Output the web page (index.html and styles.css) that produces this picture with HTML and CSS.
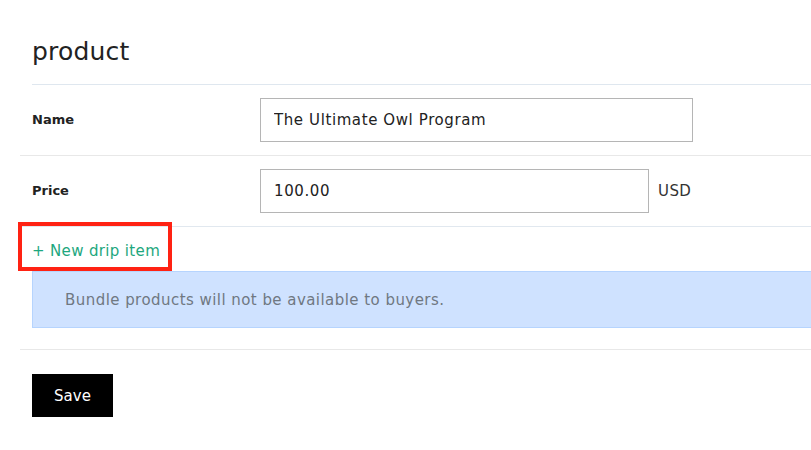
FILE: index.html
```html
<!DOCTYPE html>
<html>
<head>
<meta charset="utf-8">
<link rel="stylesheet" href="styles.css">
</head>
<body>
<div class="form">
  <div class="header"><h1 class="title">product</h1></div>
  <div class="row">
    <div class="label">Name</div>
    <div class="field"><input class="input input-name" type="text" value="The Ultimate Owl Program"></div>
  </div>
  <div class="row row-last">
    <div class="label">Price</div>
    <div class="field"><input class="input input-price" type="text" value="100.00"><span class="unit">USD</span></div>
  </div>
  <div class="drip">
    <a class="drip-link" href="#">+ New drip item</a>
  </div>
  <div class="alert">Bundle products will not be available to buyers.</div>
  <div class="actions">
    <button class="save">Save</button>
  </div>
</div>
</body>
</html>
```

FILE: styles.css
```css
* { box-sizing: border-box; }
html, body { margin: 0; padding: 0; background: #fff; }
body { font-family: "DejaVu Sans", "Open Sans", sans-serif; color: #222; }

.form { margin-left: 20px; }

.header {
  margin-left: 12px;
  height: 85px;
  border-bottom: 1px solid #dfe7ef;
}
.title {
  margin: 0;
  padding-top: 37px;
  font-size: 25px;
  font-weight: normal;
  line-height: 30px;
  letter-spacing: 0.2px;
  color: #222;
}

.row {
  display: grid;
  grid-template-columns: 228px 1fr;
  align-items: center;
  padding: 13px 0 13px 12px;
  border-bottom: 1px solid #e8e8e8;
}
.row-last { border-bottom-color: #e1e8ef; }
.label {
  font-size: 13px;
  font-weight: bold;
  color: #222;
  margin-top: -2px;
}
.field { display: flex; align-items: center; }
.input {
  height: 44px;
  border: 1px solid #b5b5b5;
  border-radius: 0;
  padding: 0 13px;
  font-family: inherit;
  font-size: 15px;
  letter-spacing: 0.6px;
  color: #222;
  outline: none;
}
.input-name { width: 433px; }
.input-price { width: 389px; }
.unit { margin-left: 9px; font-size: 15px; letter-spacing: 0.4px; color: #333; }

.drip {
  height: 44px;
  display: flex;
  align-items: flex-start;
}
.drip-link {
  display: flex;
  align-items: center;
  height: 49px;
  margin-top: -5px;
  margin-left: -2px;
  padding: 8px 8px 0 10px;
  border: 4px solid #ff2213;
  color: #1ea77e;
  font-size: 15px;
  letter-spacing: 0.35px;
  text-decoration: none;
}

.alert {
  margin-left: 12px;
  height: 57px;
  background: #cfe2ff;
  border: 1px solid #b6d4fe;
  border-right: none;
  display: flex;
  align-items: center;
  padding-left: 32px;
  font-size: 15px;
  letter-spacing: 0.45px;
  color: #6f7882;
}

.actions {
  margin-top: 21px;
  border-top: 1px solid #e8e8e8;
  padding: 24px 0 0 12px;
}
.save {
  width: 81px;
  height: 43px;
  background: #000;
  color: #fff;
  border: none;
  border-radius: 0;
  font-family: inherit;
  font-size: 15px;
  padding: 0;
}
```
